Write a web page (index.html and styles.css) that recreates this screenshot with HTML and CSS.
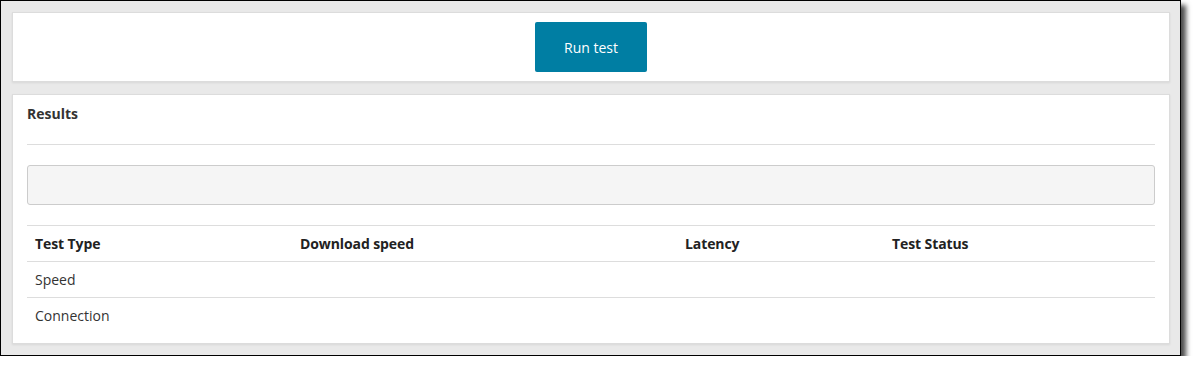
FILE: index.html
```html
<!DOCTYPE html>
<html lang="en">
<head>
    <meta charset="UTF-8">
    <title>Network Test</title>
    <link rel="stylesheet" href="styles.css">
</head>
<body>
    <div class="frame">
        <!-- Run test panel -->
        <div class="panel run-panel">
            <button type="button" class="run-btn">Run test</button>
        </div>

        <!-- Results panel -->
        <div class="panel results-panel">
            <h3>Results</h3>
            <hr>
            <div class="progress-box"></div>
            <table class="results-table">
                <thead>
                    <tr>
                        <th class="col-type">Test Type</th>
                        <th class="col-download">Download speed</th>
                        <th class="col-latency">Latency</th>
                        <th>Test Status</th>
                    </tr>
                </thead>
                <tbody>
                    <tr>
                        <td>Speed</td>
                        <td></td>
                        <td></td>
                        <td></td>
                    </tr>
                    <tr>
                        <td>Connection</td>
                        <td></td>
                        <td></td>
                        <td></td>
                    </tr>
                </tbody>
            </table>
        </div>
    </div>
</body>
</html>
```

FILE: styles.css
```css
body {
    margin: 0;
    padding: 0;
    background-color: #fff;
    font-family: "Open Sans", Arial, sans-serif;
    font-size: 14px;
    color: #333;
}

.frame {
    width: 1158px;
    height: 332px;
    border: 1px solid #000;
    background-color: #e9e9e9;
    padding: 11px 10px 11px 11px;
    box-shadow: 5px 5px 5px rgba(0, 0, 0, 0.7);
    display: flex;
    flex-direction: column;
    gap: 12px;
}

.panel {
    background: #fff;
    border: 1px solid #dcdcdc;
    box-shadow: 0 1px 2px rgba(0, 0, 0, 0.08);
}

.run-panel {
    display: flex;
    justify-content: center;
    padding: 9px 0;
}

.run-btn {
    width: 112px;
    height: 50px;
    background-color: #007ea3;
    color: #fff;
    border: none;
    border-radius: 2px;
    font-family: "Open Sans", Arial, sans-serif;
    font-size: 14px;
    cursor: pointer;
}

.results-panel {
    flex: 1;
    padding: 9px 14px 10px 14px;
}

h3 {
    margin: 0;
    font-size: 14px;
    line-height: 20px;
    font-weight: bold;
    color: #333;
}

hr {
    margin: 20px 0;
    border: none;
    border-top: 1px solid #ddd;
}

.progress-box {
    height: 38px;
    background-color: #f5f5f5;
    border: 1px solid #ccc;
    border-radius: 3px;
    margin-bottom: 20px;
}

.results-table {
    width: 100%;
    border-collapse: collapse;
}

.results-table th,
.results-table td {
    text-align: left;
    padding: 0 8px;
    height: 35px;
    border-top: 1px solid #ddd;
    font-size: 14px;
}

.results-table th {
    font-weight: bold;
    color: #222;
    letter-spacing: -0.1px;
}

.col-type {
    width: 249px;
}

.col-download {
    width: 369px;
}

.col-latency {
    width: 191px;
}
```
